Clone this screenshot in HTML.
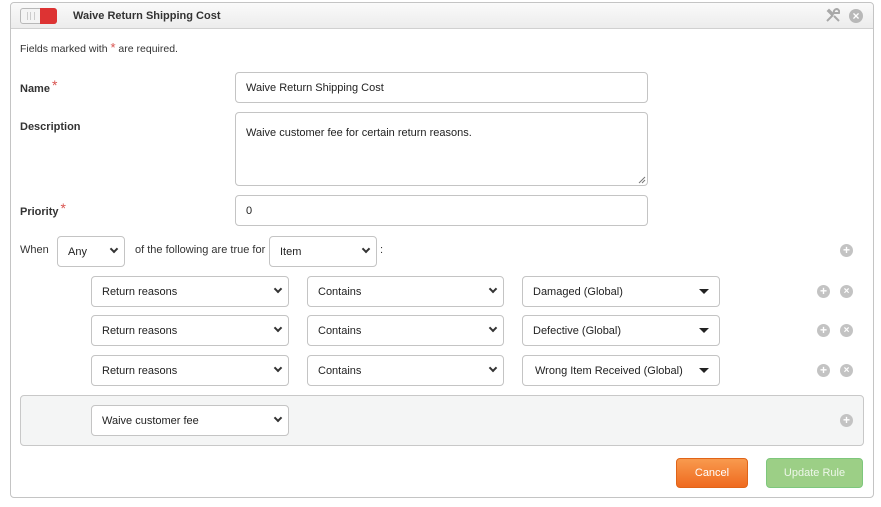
<!DOCTYPE html>
<html><head><meta charset="utf-8"><style>
*{box-sizing:border-box;margin:0;padding:0}
body{width:881px;height:507px;background:#fff;font-family:"Liberation Sans",Arial,sans-serif;font-size:11px;color:#333;position:relative;overflow:hidden}
.a{position:absolute}
.panel{left:10px;top:2px;width:864px;height:496px;border:1px solid #c4c4c4;border-radius:4px}
.hdr{left:11px;top:3px;width:862px;height:26px;background:linear-gradient(#fafafa,#ececec);border-bottom:1px solid #d0d0d0;border-radius:4px 4px 0 0}
.inp{border:1px solid #c4c4c4;border-radius:4px;background:#fff;padding-left:10px;line-height:30px;font-size:11px;color:#222}
.lbl{font-weight:bold;font-size:11px;color:#333}
.st{color:#d9534f;font-weight:normal;font-size:14px;position:relative;top:-2px;margin-left:2px}
.chev{position:absolute;right:7px;top:13px;width:6px;height:6px;border-right:2px solid #333;border-bottom:2px solid #333;transform:rotate(45deg);margin-top:-4px}
.tri{position:absolute;right:10px;top:12px;width:0;height:0;border-left:5px solid transparent;border-right:5px solid transparent;border-top:5px solid #222}
.ic{position:absolute;width:13px;height:13px;border-radius:50%;background:#c3c3c3;color:#fff;font-size:12px;font-weight:bold;line-height:13px;text-align:center}
</style></head><body>
<div class="a panel"></div>
<div class="a hdr"></div>
<div class="a" style="left:20px;top:8px;width:37px;height:16px;border:1px solid #b8b8b8;border-radius:3px;background:#f4f4f4"></div>
<div class="a" style="left:27px;top:12px;width:8px;height:8px;border-left:1px solid #ccc;border-right:1px solid #ccc"></div>
<div class="a" style="left:30px;top:12px;width:1px;height:8px;background:#ccc"></div>
<div class="a" style="left:40px;top:8px;width:17px;height:16px;background:#d33;border-radius:0 3px 3px 0"></div>
<div class="a lbl" style="left:73px;top:9px;line-height:14px">Waive Return Shipping Cost</div>
<svg class="a" style="left:826px;top:8px" width="14" height="14" viewBox="0 0 14 14"><path d="M1 13L7 7M3 2l4 4-1 1-4-4zM13 13L8 8M11 1a3 3 0 0 0-3 4l5 0a3 3 0 0 0-2-4z" stroke="#a8a8a8" stroke-width="2" fill="none"/></svg>
<div class="ic" style="left:849px;top:9px;width:14px;height:14px;line-height:14px;background:#b8b8b8">×</div>

<div class="a" style="left:20px;top:40px;font-size:10.5px;color:#333">Fields marked with <span style="color:#d9534f;font-size:13px">*</span> are required.</div>

<div class="a lbl" style="left:20px;top:79px">Name<span class="st">*</span></div>
<div class="a inp" style="left:235px;top:72px;width:413px;height:31px">Waive Return Shipping Cost</div>
<div class="a lbl" style="left:20px;top:121px">Description</div>
<div class="a inp" style="left:235px;top:112px;width:413px;height:74px;line-height:16px;padding-top:12px">Waive customer fee for certain return reasons.</div>
<svg class="a" style="left:638px;top:176px" width="8" height="8"><path d="M1 7L7 1M4 7L7 4" stroke="#777"/></svg>
<div class="a lbl" style="left:20px;top:202px">Priority<span class="st">*</span></div>
<div class="a inp" style="left:235px;top:195px;width:413px;height:31px">0</div>

<div class="a" style="left:20px;top:244px">When</div>
<div class="a inp" style="left:57px;top:236px;width:68px;height:31px">Any<span class="chev"></span></div>
<div class="a" style="left:135px;top:244px">of the following are true for</div>
<div class="a inp" style="left:269px;top:236px;width:108px;height:31px">Item<span class="chev"></span></div>
<div class="a" style="left:380px;top:244px">:</div>
<div class="ic" style="left:840px;top:244px">+</div>

<div class="a inp" style="left:91px;top:276px;width:198px;height:31px">Return reasons<span class="chev"></span></div>
<div class="a inp" style="left:307px;top:276px;width:197px;height:31px">Contains<span class="chev"></span></div>
<div class="a inp" style="left:522px;top:276px;width:198px;height:31px">Damaged (Global)<span class="tri"></span></div>
<div class="ic" style="left:817px;top:285px">+</div><div class="ic" style="left:840px;top:285px;font-size:10px">×</div>

<div class="a inp" style="left:91px;top:315px;width:198px;height:31px">Return reasons<span class="chev"></span></div>
<div class="a inp" style="left:307px;top:315px;width:197px;height:31px">Contains<span class="chev"></span></div>
<div class="a inp" style="left:522px;top:315px;width:198px;height:31px">Defective (Global)<span class="tri"></span></div>
<div class="ic" style="left:817px;top:324px">+</div><div class="ic" style="left:840px;top:324px;font-size:10px">×</div>

<div class="a inp" style="left:91px;top:355px;width:198px;height:31px">Return reasons<span class="chev"></span></div>
<div class="a inp" style="left:307px;top:355px;width:197px;height:31px">Contains<span class="chev"></span></div>
<div class="a inp" style="left:522px;top:355px;width:198px;height:31px;padding-left:12px">Wrong Item Received (Global)<span class="tri"></span></div>
<div class="ic" style="left:817px;top:364px">+</div><div class="ic" style="left:840px;top:364px;font-size:10px">×</div>

<div class="a" style="left:20px;top:395px;width:844px;height:51px;background:#f4f5f5;border:1px solid #c8c8c8;border-radius:4px"></div>
<div class="a inp" style="left:91px;top:405px;width:198px;height:31px">Waive customer fee<span class="chev"></span></div>
<div class="ic" style="left:840px;top:414px">+</div>

<div class="a" style="left:676px;top:458px;width:72px;height:30px;border-radius:4px;background:linear-gradient(#f89a4e,#ef6a1f);border:1px solid #e06418;color:#fff;text-align:center;line-height:28px">Cancel</div>
<div class="a" style="left:766px;top:458px;width:97px;height:30px;border-radius:4px;background:#9ccf86;border:1px solid #7ec77c;color:#eef7ea;text-align:center;line-height:28px">Update Rule</div>
</body></html>
